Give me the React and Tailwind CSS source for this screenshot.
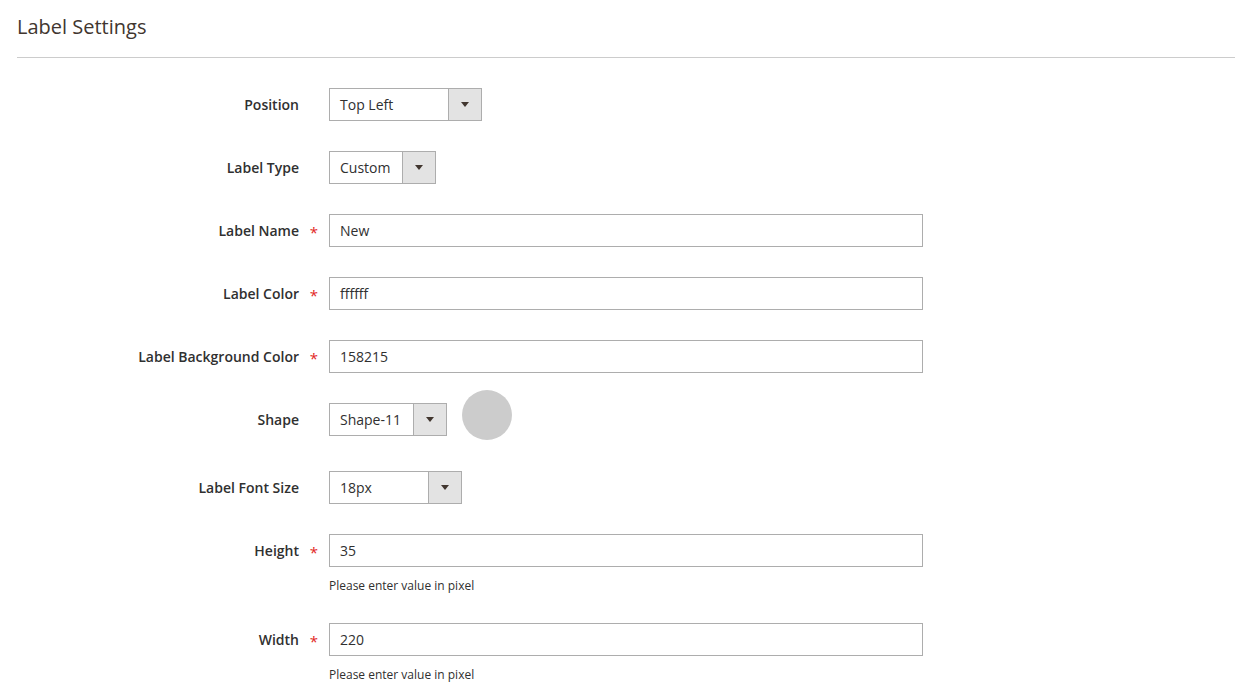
const Arrow = () => (
  <svg width="8" height="5" viewBox="0 0 8 5" className="block">
    <path d="M0 0h8L4 5z" fill="#41362f" />
  </svg>
);

const Select = ({ value, width }) => (
  <div className={`flex h-[33px] border border-[#adadad] bg-white ${width}`}>
    <div className="flex-1 flex items-center pl-[10px] text-[14px] text-[#303030]">{value}</div>
    <div className="w-[33px] h-full bg-[#e3e3e3] border-l border-[#adadad] flex items-center justify-center">
      <Arrow />
    </div>
  </div>
);

const Input = ({ value }) => (
  <div className="h-[33px] w-[594px] border border-[#adadad] bg-white flex items-center pl-[10px] text-[14px] text-[#303030]">
    {value}
  </div>
);

const Row = ({ label, required, children, note, extra }) => (
  <div className="flex items-start">
    <div className="w-[282px] h-[33px] flex items-center justify-end text-[14px] font-semibold text-[#303030]">
      {label}
    </div>
    <div className="w-[30px] h-[33px] flex items-center justify-center text-[#e22626] text-[15px] pt-[3px]">
      {required ? '*' : ''}
    </div>
    <div className="flex flex-col">
      <div className="flex items-start gap-[15px]">
        {children}
        {extra}
      </div>
      {note && <div className="text-[12px] text-[#303030] mt-[11px] leading-[15px]">{note}</div>}
    </div>
  </div>
);

export default function App() {
  return (
    <div className="min-h-screen bg-white px-[17px] pt-[13px]" style={{ fontFamily: '"Open Sans", sans-serif' }}>
      <div className="text-[20px] text-[#41362f] leading-[28px] pb-[16px] border-b border-[#cccccc]">Label Settings</div>
      <div className="flex flex-col gap-[30px] pt-[30px]">
        <Row label="Position">
          <Select value="Top Left" width="w-[153px]" />
        </Row>
        <Row label="Label Type">
          <Select value="Custom" width="w-[107px]" />
        </Row>
        <Row label="Label Name" required>
          <Input value="New" />
        </Row>
        <Row label="Label Color" required>
          <Input value="ffffff" />
        </Row>
        <Row label="Label Background Color" required>
          <Input value="158215" />
        </Row>
        <Row
          label="Shape"
          extra={<div className="w-[50px] h-[50px] rounded-full bg-[#cccccc] -mt-[13px] mb-[1px]" />}
        >
          <Select value="Shape-11" width="w-[118px]" />
        </Row>
        <Row label="Label Font Size">
          <Select value="18px" width="w-[133px]" />
        </Row>
        <Row label="Height" required note="Please enter value in pixel">
          <Input value="35" />
        </Row>
        <Row label="Width" required note="Please enter value in pixel">
          <Input value="220" />
        </Row>
      </div>
    </div>
  );
}
